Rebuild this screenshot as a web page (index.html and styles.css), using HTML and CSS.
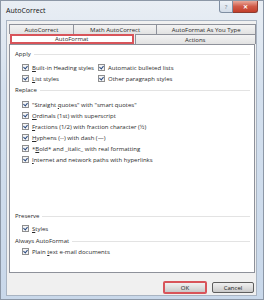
FILE: index.html
```html
<!DOCTYPE html>
<html lang="en">
<head>
  <meta charset="UTF-8" />
  <title>AutoCorrect</title>
  <link rel="stylesheet" href="styles.css">
</head>
<body>
  <div class="window">
    <div class="titlebar">
      <span class="title">AutoCorrect</span>
      <div class="controls">
        <span class="ctl help">?</span>
        <span class="ctl close">&#x2715;</span>
      </div>
    </div>

    <div class="client">
      <!-- tabs, two rows -->
      <div class="tabs">
        <div class="tabrow">
          <span class="tab t-ac">AutoCorrect</span>
          <span class="tab t-math">Math AutoCorrect</span>
          <span class="tab t-ayt">AutoFormat As You Type</span>
        </div>
        <div class="tabrow">
          <span class="tab t-af active">AutoFormat</span>
          <span class="tab t-act">Actions</span>
        </div>
      </div>

      <div class="panel">
        <div class="group"><span>Apply</span></div>
        <div class="cols">
          <label class="row"><i class="cb"></i><span><u>B</u>uilt-in Heading styles</span></label>
          <label class="row"><i class="cb"></i><span>Automatic bulleted lists</span></label>
          <label class="row"><i class="cb"></i><span><u>L</u>ist styles</span></label>
          <label class="row"><i class="cb"></i><span>Other paragraph styles</span></label>
        </div>

        <div class="group g-replace"><span>Replace</span></div>
        <div class="list">
          <label class="row"><i class="cb"></i><span>"Straight <u>q</u>uotes" with "smart quotes"</span></label>
          <label class="row"><i class="cb"></i><span><u>O</u>rdinals (1st) with superscript</span></label>
          <label class="row"><i class="cb"></i><span><u>F</u>ractions (1/2) with fraction character (½)</span></label>
          <label class="row"><i class="cb"></i><span><u>H</u>yphens (--) with dash (&#8212;)</span></label>
          <label class="row"><i class="cb"></i><span>*<u>B</u>old* and _italic_ with real formatting</span></label>
          <label class="row"><i class="cb"></i><span><u>I</u>nternet and network paths with hyperlinks</span></label>
        </div>

        <div class="group g-preserve"><span>Preserve</span></div>
        <div class="list l-styles">
          <label class="row"><i class="cb"></i><span><u>S</u>tyles</span></label>
        </div>
        <div class="group g-always"><span>Always AutoFormat</span></div>
        <div class="list l-plain">
          <label class="row"><i class="cb"></i><span>Plain <u>t</u>ext e-mail documents</span></label>
        </div>
      </div>

      <div class="buttons">
        <div class="btn btn-ok">OK</div>
        <div class="btn btn-cancel">Cancel</div>
      </div>
    </div>
  </div>
</body>
</html>
```

FILE: styles.css
```css
body {
  margin: 0;
  font-family: 'Open Sans', 'Noto Sans', sans-serif;
  font-size: 6px;
  color: #2a2a2a;
}
.window {
  width: 264px;
  height: 300px;
  box-sizing: border-box;
  background: linear-gradient(#e9eef4, #d4e0ee 30%, #c9d8ea);
  border: 1px solid #8c97a6;
  padding: 0 6px 3px 5px;
  display: flex;
  flex-direction: column;
}
.titlebar {
  height: 19px;
  display: flex;
  justify-content: space-between;
  align-items: flex-start;
}
.title {
  font-size: 7px;
  margin-top: 5px;
  color: #111;
}
.controls {
  display: flex;
  margin-right: -1px;
}
.ctl {
  height: 12px;
  display: flex;
  align-items: center;
  justify-content: center;
  border: 1px solid #7f8ea2;
  border-top: none;
  box-sizing: border-box;
  color: #fff;
}
.help {
  width: 14px;
  background: linear-gradient(#eef2f7, #d3dce8);
  color: #6b7889;
  font-size: 6px;
  border-radius: 0 0 0 3px;
}
.close {
  width: 25px;
  background: linear-gradient(#e9a99b, #d05a48 50%, #c33e2a);
  border-color: #8e3b30;
  border-left: none;
  border-radius: 0 0 3px 0;
  font-size: 6px;
  font-weight: bold;
}
.client {
  flex: 1;
  min-height: 0;
  background: #f0f0f0;
  border: 1px solid #a9b4c2;
  padding: 3px 1px 0 2px;
  display: flex;
  flex-direction: column;
}
.tabs {
  display: flex;
  flex-direction: column;
}
.tabrow {
  display: flex;
  height: 10px;
}
.tab {
  box-sizing: border-box;
  display: flex;
  align-items: center;
  justify-content: center;
  background: linear-gradient(#f3f3f3, #e2e2e2);
  border: 1px solid #8e919a;
  border-bottom: none;
  margin-right: -1px;
}
.t-ac { width: 65px; }
.t-math { width: 85px; }
.t-ayt { width: 100px; }
.t-af { width: 127px; }
.t-act { width: 123px; }
.tab.active {
  background: #fff;
  border: 2px solid #d8545a;
  margin-left: 1px;
  width: 125px;
  margin-right: 1px;
}
.panel {
  height: 229px;
  flex-shrink: 0;
  box-sizing: border-box;
  background: #fff;
  border: 1px solid #8e919a;
  padding: 4px 4px 0 5px;
}
.group {
  display: flex;
  align-items: center;
  height: 10px;
}
.group::after {
  content: "";
  flex: 1;
  border-top: 1px solid #e3e3e3;
  margin-left: 3px;
}
.g-replace { margin-top: 1px; }
.g-preserve { margin-top: 46px; }
.g-always { margin-top: 2px; }
.cols {
  display: grid;
  grid-template-columns: 76px 1fr;
  padding-top: 3px;
  padding-left: 7px;
}
.list {
  padding-top: 4px;
  padding-left: 7px;
}
.list.l-styles { padding-top: 2px; }
.list.l-plain { padding-top: 0; }
.row {
  display: flex;
  align-items: center;
  height: 11px;
  white-space: nowrap;
}
.cb {
  width: 7px;
  height: 7px;
  box-sizing: border-box;
  border: 1px solid #8f8f8f;
  background: #f4f4f4;
  margin-right: 3px;
  position: relative;
}
.cb::after {
  content: "";
  position: absolute;
  left: 1px;
  top: 0;
  width: 2px;
  height: 3px;
  border: solid #2a4a80;
  border-width: 0 1px 1px 0;
  transform: rotate(40deg);
}
.buttons {
  display: grid;
  grid-template-columns: 44px 42px;
  column-gap: 5px;
  justify-content: end;
  align-items: center;
  margin-top: 8px;
  padding-right: 1px;
}
.btn {
  box-sizing: border-box;
  height: 11px;
  display: flex;
  align-items: center;
  justify-content: center;
  border: 1px solid #5e5e5e;
  border-radius: 2px;
  background: linear-gradient(#f0f0f0, #dedede 50%, #c9c9c9);
  color: #1a1a1a;
}
.btn-ok {
  height: 13px;
  border: 2px solid #d8545a;
}
```
